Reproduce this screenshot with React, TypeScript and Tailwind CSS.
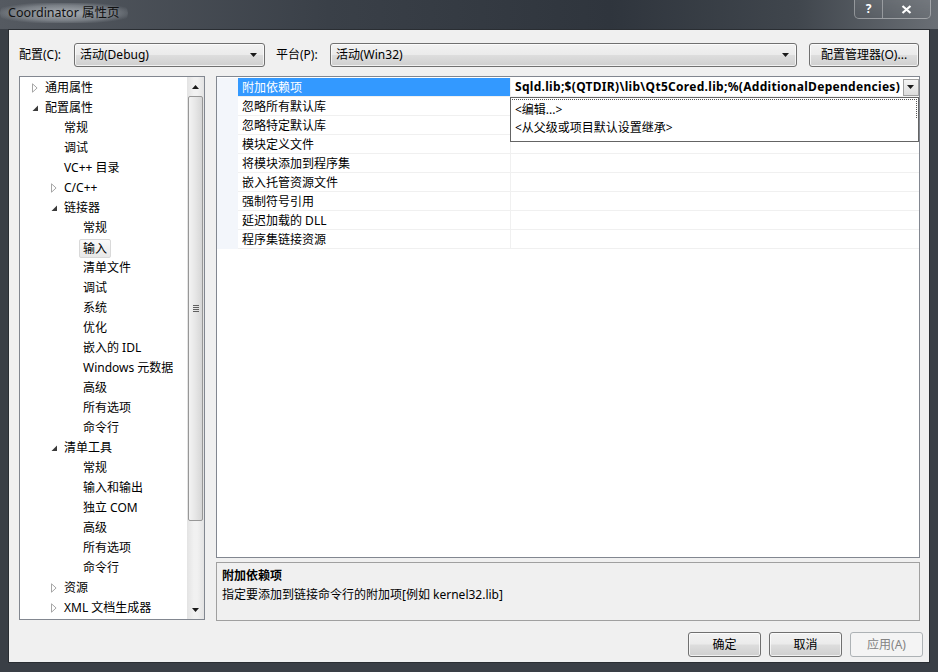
import React from "react";

const font = "font-['Noto_Sans','Noto_Sans_CJK_SC',sans-serif]";

const aeroBtn =
  "bg-[linear-gradient(180deg,#f2f2f2_0%,#ebebeb_48%,#dddddd_52%,#cfcfcf_100%)] border border-[#707070] rounded-[3px] shadow-[inset_0_0_0_1px_rgba(255,255,255,0.7)]";

type TreeItem = { label: string; level: number; arrow?: "open" | "closed"; selected?: boolean };

const tree: TreeItem[] = [
  { label: "通用属性", level: 0, arrow: "closed" },
  { label: "配置属性", level: 0, arrow: "open" },
  { label: "常规", level: 1 },
  { label: "调试", level: 1 },
  { label: "VC++ 目录", level: 1 },
  { label: "C/C++", level: 1, arrow: "closed" },
  { label: "链接器", level: 1, arrow: "open" },
  { label: "常规", level: 2 },
  { label: "输入", level: 2, selected: true },
  { label: "清单文件", level: 2 },
  { label: "调试", level: 2 },
  { label: "系统", level: 2 },
  { label: "优化", level: 2 },
  { label: "嵌入的 IDL", level: 2 },
  { label: "Windows 元数据", level: 2 },
  { label: "高级", level: 2 },
  { label: "所有选项", level: 2 },
  { label: "命令行", level: 2 },
  { label: "清单工具", level: 1, arrow: "open" },
  { label: "常规", level: 2 },
  { label: "输入和输出", level: 2 },
  { label: "独立 COM", level: 2 },
  { label: "高级", level: 2 },
  { label: "所有选项", level: 2 },
  { label: "命令行", level: 2 },
  { label: "资源", level: 1, arrow: "closed" },
  { label: "XML 文档生成器", level: 1, arrow: "closed" },
];

const indent = ["pl-[12px]", "pl-[31px]", "pl-[50px]"];

const props = [
  "附加依赖项",
  "忽略所有默认库",
  "忽略特定默认库",
  "模块定义文件",
  "将模块添加到程序集",
  "嵌入托管资源文件",
  "强制符号引用",
  "延迟加载的 DLL",
  "程序集链接资源",
];

const DownTri = () => (
  <svg width="8" height="5" viewBox="0 0 8 5">
    <path d="M0 0h7l-3.5 4z" fill="#1a1a1a" />
  </svg>
);

const Arrow = ({ kind }: { kind?: "open" | "closed" }) => (
  <span className="w-[13px] h-[20px] flex items-center shrink-0">
    {kind === "closed" && (
      <svg width="6" height="10" viewBox="0 0 6 10">
        <path d="M0.5 0.8v8.4l4.6-4.2z" fill="none" stroke="#a6a6a6" strokeWidth="1" />
      </svg>
    )}
    {kind === "open" && (
      <svg width="7" height="7" viewBox="0 0 7 7">
        <path d="M6 0.5v5.5h-5.5z" fill="#3a3a3a" />
      </svg>
    )}
  </span>
);

function TreePanel() {
  return (
    <div className="w-[186px] h-[544px] border border-[#828790] bg-white flex">
      <div className="flex-1 pt-[1px] overflow-hidden text-[12px] text-black">
        {tree.map((t, i) => (
          <div key={i} className={`h-[20px] flex items-center ${indent[t.level]}`}>
            <Arrow kind={t.arrow} />
            <span
              className={
                t.selected
                  ? "-ml-[4px] px-[3px] h-[19px] leading-[17px] border border-[#d9d9d9] rounded-[2px] bg-[linear-gradient(180deg,#fafafa,#e8e8e8)]"
                  : "leading-[20px] whitespace-nowrap"
              }
            >
              {t.label}
            </span>
          </div>
        ))}
      </div>
      <div className="w-[17px] flex flex-col bg-[linear-gradient(90deg,#e3e3e3,#f1f1f1_40%,#f1f1f1_60%,#e3e3e3)]">
        <div className="h-[19px] flex items-center justify-center">
          <svg width="7" height="4" viewBox="0 0 7 4">
            <path d="M0 4h7l-3.5-4z" fill="#1a1a1a" />
          </svg>
        </div>
        <div className="h-[425px] mx-[1px] rounded-[2px] border border-[#979797] bg-[linear-gradient(90deg,#f3f3f3,#e6e6e6_50%,#d6d6d6)] flex items-center justify-center">
          <div className="flex flex-col gap-[1px]">
            <div className="w-[6px] h-[1px] bg-[#606060]" />
            <div className="w-[6px] h-[1px] bg-[#606060]" />
            <div className="w-[6px] h-[1px] bg-[#606060]" />
            <div className="w-[6px] h-[1px] bg-[#606060]" />
          </div>
        </div>
        <div className="flex-1" />
        <div className="h-[19px] flex items-center justify-center">
          <svg width="7" height="4" viewBox="0 0 7 4">
            <path d="M0 0h7l-3.5 4z" fill="#1a1a1a" />
          </svg>
        </div>
      </div>
    </div>
  );
}

function PropertyGrid() {
  return (
    <div className="relative h-[482px] border border-[#828790] bg-white text-[12px] text-black">
      <div className="flex pt-[1px]">
        <div className="w-[21px] h-[171px] bg-[#f3f6fb]" />
        <div className="flex-1">
          {props.map((p, i) => (
            <div key={i} className="h-[19px] flex border-b border-[#f0f0f0]">
              <div
                className={`w-[273px] pl-[4px] leading-[19px] border-r border-[#f0f0f0] ${
                  i === 0 ? "bg-[#3399ff] text-white" : ""
                }`}
              >
                {p}
              </div>
              <div className="flex-1 flex items-center min-w-0">
                {i === 0 && (
                  <>
                    <span className="flex-1 pl-[4px] font-bold tracking-[0.3px] whitespace-nowrap overflow-hidden leading-[18px]">
                      Sqld.lib;$(QTDIR)\lib\Qt5Cored.lib;%(AdditionalDependencies)
                    </span>
                    <span className="w-[16px] h-[17px] flex items-center justify-center border border-[#a0a0a0] bg-[linear-gradient(180deg,#f4f4f4,#dcdcdc)]">
                      <DownTri />
                    </span>
                  </>
                )}
              </div>
            </div>
          ))}
        </div>
      </div>
      <div className="absolute left-[293px] top-[20px] w-[409px] h-[45px] border border-[#646464] bg-white">
        <div className="h-[19px] mt-[1px] mx-[1px] pl-[3px] leading-[19px] border-r border-t border-dotted border-[#555]">
          &lt;编辑...&gt;
        </div>
        <div className="h-[19px] pl-[4px] leading-[19px]">&lt;从父级或项目默认设置继承&gt;</div>
      </div>
    </div>
  );
}

export default function App() {
  return (
    <div className={`w-[938px] h-[672px] bg-[#3a3f46] flex flex-col overflow-hidden ${font}`}>
      <div className="h-[29px] relative flex items-start bg-[linear-gradient(90deg,#555a61,#3a4048_35%,#2f353d_65%,#40464d_85%,#6a6f75)]">
        <div className="mt-[3px] px-[8px] h-[20px] rounded-full bg-[radial-gradient(ellipse_at_center,rgba(200,205,210,0.75)_0%,rgba(170,176,182,0.45)_55%,rgba(150,156,162,0)_80%)] flex items-center">
          <span className="text-[12.5px] text-[#111]">Coordinator 属性页</span>
        </div>
        <div className="absolute right-[7px] top-0 flex h-[19px] rounded-b-[5px] border border-t-0 border-[rgba(255,255,255,0.35)] bg-[linear-gradient(180deg,rgba(255,255,255,0.08),rgba(255,255,255,0.02))]">
          <div className="w-[28px] flex items-center justify-center text-white font-bold text-[12px] border-r border-[rgba(255,255,255,0.35)]">
            ?
          </div>
          <div className="w-[47px] flex items-center justify-center">
            <svg width="11" height="9" viewBox="0 0 11 9">
              <path d="M1.5 1l8 7M9.5 1l-8 7" stroke="#fff" strokeWidth="2.2" />
            </svg>
          </div>
        </div>
      </div>

      <div className="mx-[8px] h-[634px] bg-[#f0f0f0] border border-[#2a2e33] flex flex-col text-[12px] text-black">
        <div className="mt-[13px] h-[24px] pl-[10px] flex items-center">
          <span className="w-[55px]">配置(C):</span>
          <div className={`w-[191px] h-[24px] flex items-center pl-[5px] pr-[6px] ${aeroBtn}`}>
            <span className="flex-1">活动(Debug)</span>
            <DownTri />
          </div>
          <span className="ml-[11px] w-[54px]">平台(P):</span>
          <div className={`w-[467px] h-[24px] flex items-center pl-[5px] pr-[6px] ${aeroBtn}`}>
            <span className="flex-1">活动(Win32)</span>
            <DownTri />
          </div>
          <div className={`ml-[12px] w-[110px] h-[24px] flex items-center justify-center ${aeroBtn}`}>
            配置管理器(O)...
          </div>
        </div>

        <div className="mt-[9px] pl-[10px] flex gap-[11px]">
          <TreePanel />
          <div className="w-[704px] flex flex-col gap-[4px]">
            <PropertyGrid />
            <div className="h-[59px] border border-[#a0a0a0] bg-[#f0f0f0] pl-[5px] pt-[3px]">
              <div className="font-bold leading-[19px]">附加依赖项</div>
              <div className="leading-[19px]">指定要添加到链接命令行的附加项[例如 kernel32.lib]</div>
            </div>
          </div>
        </div>

        <div className="mt-[11px] pr-[6px] flex justify-end gap-[8px]">
          <div className={`w-[73px] h-[25px] flex items-center justify-center ${aeroBtn}`}>确定</div>
          <div className={`w-[73px] h-[25px] flex items-center justify-center ${aeroBtn}`}>取消</div>
          <div className="w-[73px] h-[25px] flex items-center justify-center border border-[#adb2b5] rounded-[3px] bg-[#f4f4f4] text-[#838383]">
            应用(A)
          </div>
        </div>
      </div>
    </div>
  );
}
